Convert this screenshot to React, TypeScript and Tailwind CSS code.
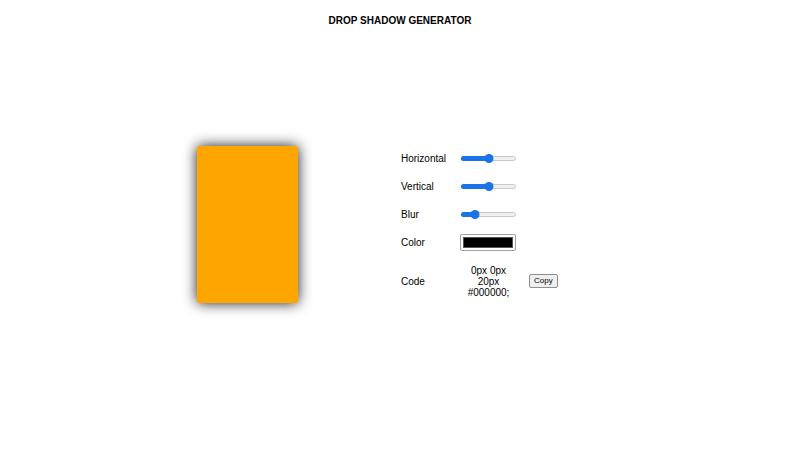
import { useState } from "react";

// simple slider drawn with divs: gray track, blue fill, round thumb
function Slider({ value, max }: { value: number; max: number }) {
    const pct = (value / max) * 100;
    return (
        <div className="relative w-[55px] h-[10px] flex items-center">
            <div className="w-full h-[5px] rounded-full bg-[#efefef] border border-[#c8c8c8]" />
            <div
                className="absolute left-0 h-[5px] rounded-full bg-[#1a73e8]"
                style={{ width: `${pct}%` }}
            />
            <div
                className="absolute w-[9px] h-[9px] rounded-full bg-[#1a73e8] -translate-x-1/2"
                style={{ left: `${pct}%` }}
            />
        </div>
    );
}

export default function App() {
    const [h] = useState(0);
    const [v] = useState(0);
    const [blur] = useState(20);
    const [color] = useState("#000000");
    const code = `${h}px ${v}px ${blur}px ${color};`;

    return (
        <div className="w-[800px] h-[450px] bg-white text-black font-['Liberation_Sans',Arial,sans-serif]">
            <h1 className="pt-[15px] text-center text-[10px] font-bold leading-[12px]">DROP SHADOW GENERATOR</h1>

            <div className="flex items-center pt-[117px]">
                <div className="ml-[197px] w-[101px] h-[157px] rounded-[3px] bg-[#ffa500] shadow-[0_0_14px_rgba(0,0,0,0.9)]" />

                <div className="ml-[103px] grid grid-cols-[60px_55px_auto] grid-rows-[28px_28px_28px_29px_48px] items-center text-[10px] leading-[11px]">
                    <span>Horizontal</span>
                    <Slider value={50} max={100} />
                    <span />

                    <span>Vertical</span>
                    <Slider value={50} max={100} />
                    <span />

                    <span>Blur</span>
                    <Slider value={25} max={100} />
                    <span />

                    <span>Color</span>
                    <div className="-ml-[1px] w-[56px] h-[17px] border border-[#a0a0a0] rounded-[2px] bg-white p-[2px]">
                        <div className="w-full h-full bg-black border border-[#555]" />
                    </div>
                    <span />

                    <span>Code</span>
                    <span className="text-center">{code}</span>
                    <button className="ml-[13px] h-[14px] px-[4px] text-[8px] leading-[10px] bg-[#efefef] border border-[#8f8f8f] rounded-[2px]">
                        Copy
                    </button>
                </div>
            </div>
        </div>
    );
}
